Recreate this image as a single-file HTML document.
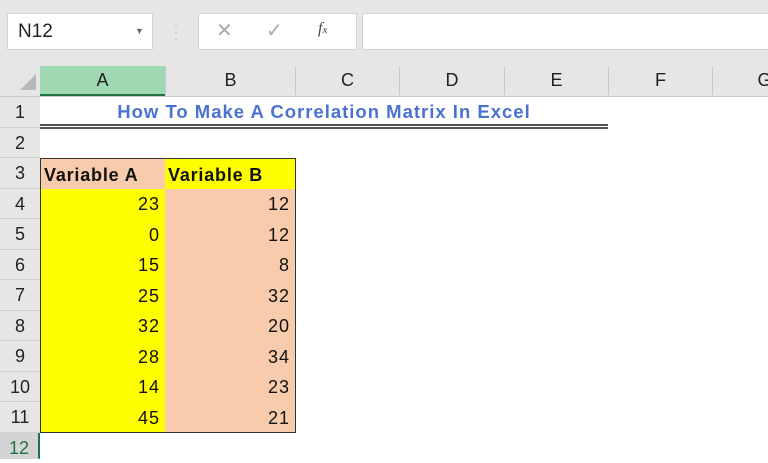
<!DOCTYPE html>
<html><head><style>
body{margin:0;width:768px;height:459px;overflow:hidden;background:#fff;font-family:"Liberation Sans",sans-serif;position:relative}
.a{position:absolute;box-sizing:border-box}
.hdr{font-size:18px;color:#222;text-align:center;line-height:29px}
.rh{font-size:18px;color:#222;text-align:center;width:40px;left:0;line-height:30px;background:#e6e6e6;border-bottom:1px solid #d0d0d0}
.num{font-size:18px;letter-spacing:1px;color:#111;text-align:right;padding-right:5px;line-height:30px}
</style></head><body>
<div class="a" style="left:0;top:0;width:768px;height:66px;background:#e6e6e6"></div>
<div class="a" style="left:7px;top:13px;width:146px;height:37px;background:#fff;border:1px solid #d4d4d4;font-size:19px;line-height:35px;padding-left:10px;color:#222">N12<span style="position:absolute;left:127px;top:0;font-size:9px;color:#666">▼</span></div>
<div class="a" style="left:174px;top:22px;color:#aaa;font-size:12px;line-height:7px">·<br>·<br>·</div>
<div class="a" style="left:198px;top:13px;width:159px;height:37px;background:#fff;border:1px solid #d4d4d4"></div>
<div class="a" style="left:216px;top:18px;color:#aaa;font-size:20px">✕</div>
<div class="a" style="left:266px;top:18px;color:#aaa;font-size:20px">✓</div>
<div class="a" style="left:318px;top:20px;color:#444;font-size:16px;font-family:'Liberation Serif',serif;font-style:italic">f<span style="font-size:11px">x</span></div>
<div class="a" style="left:362px;top:13px;width:410px;height:37px;background:#fff;border:1px solid #d4d4d4"></div>
<div class="a" style="left:0;top:66px;width:768px;height:31px;background:#e6e6e6;border-bottom:1px solid #c8c8c8"></div>
<svg class="a" style="left:18px;top:72px" width="20" height="20"><polygon points="18,2 18,18 2,18" fill="#b8b8b8"/></svg>
<div class="a hdr" style="left:40px;top:66px;width:125px;height:30px;background:#a0d8b4;border-bottom:2px solid #217346">A</div>
<div class="a hdr" style="left:165px;top:66px;width:130px;border-left:1px solid #c8c8c8">B</div>
<div class="a hdr" style="left:295px;top:66px;width:104px;border-left:1px solid #c8c8c8">C</div>
<div class="a hdr" style="left:399px;top:66px;width:105px;border-left:1px solid #c8c8c8">D</div>
<div class="a hdr" style="left:504px;top:66px;width:104px;border-left:1px solid #c8c8c8">E</div>
<div class="a hdr" style="left:608px;top:66px;width:104px;border-left:1px solid #c8c8c8">F</div>
<div class="a hdr" style="left:712px;top:66px;width:104px;border-left:1px solid #c8c8c8">G</div>
<div class="a" style="left:39px;top:97px;width:1px;height:362px;background:#c8c8c8"></div>
<div class="a rh" style="top:97px;height:31px">1</div>
<div class="a rh" style="top:128px;height:30px">2</div>
<div class="a rh" style="top:158px;height:31px">3</div>
<div class="a rh" style="top:189px;height:30px">4</div>
<div class="a rh" style="top:219px;height:31px">5</div>
<div class="a rh" style="top:250px;height:30px">6</div>
<div class="a rh" style="top:280px;height:31px">7</div>
<div class="a rh" style="top:311px;height:30px">8</div>
<div class="a rh" style="top:341px;height:31px">9</div>
<div class="a rh" style="top:372px;height:30px">10</div>
<div class="a rh" style="top:402px;height:31px">11</div>
<div class="a rh" style="top:433px;height:26px;color:#217346;background:#d4d4d4;border-right:2px solid #217346">12</div>
<div class="a" style="left:40px;top:99px;width:568px;text-align:center;font-weight:bold;font-size:18.5px;letter-spacing:1px;color:#4a72d0;line-height:26px">How To Make A Correlation Matrix In Excel</div>
<div class="a" style="left:40px;top:124px;width:568px;height:5px;border-top:2px solid #555;border-bottom:2px solid #555"></div>
<div class="a" style="left:40px;top:158px;width:256px;height:275px;border:1px solid #333"></div>
<div class="a" style="left:41px;top:159px;width:124px;height:30px;background:#f8cbad;font-weight:bold;font-size:18px;letter-spacing:0.8px;line-height:32px;padding-left:3px;color:#111;white-space:nowrap">Variable A</div>
<div class="a" style="left:165px;top:159px;width:130px;height:30px;background:#ffff00;font-weight:bold;font-size:18px;letter-spacing:0.8px;line-height:32px;padding-left:3px;color:#111;white-space:nowrap">Variable B</div>
<div class="a" style="left:41px;top:189px;width:124px;height:243px;background:#ffff00"></div>
<div class="a" style="left:165px;top:189px;width:130px;height:243px;background:#f8cbad"></div>
<div class="a" style="left:41px;top:189px;width:124px">
<div class="num" style="height:30.5px">23</div><div class="num" style="height:30.5px">0</div><div class="num" style="height:30.5px">15</div><div class="num" style="height:30.5px">25</div><div class="num" style="height:30.5px">32</div><div class="num" style="height:30.5px">28</div><div class="num" style="height:30.5px">14</div><div class="num" style="height:30.5px">45</div></div>
<div class="a" style="left:165px;top:189px;width:130px">
<div class="num" style="height:30.5px">12</div><div class="num" style="height:30.5px">12</div><div class="num" style="height:30.5px">8</div><div class="num" style="height:30.5px">32</div><div class="num" style="height:30.5px">20</div><div class="num" style="height:30.5px">34</div><div class="num" style="height:30.5px">23</div><div class="num" style="height:30.5px">21</div></div>
</body></html>
